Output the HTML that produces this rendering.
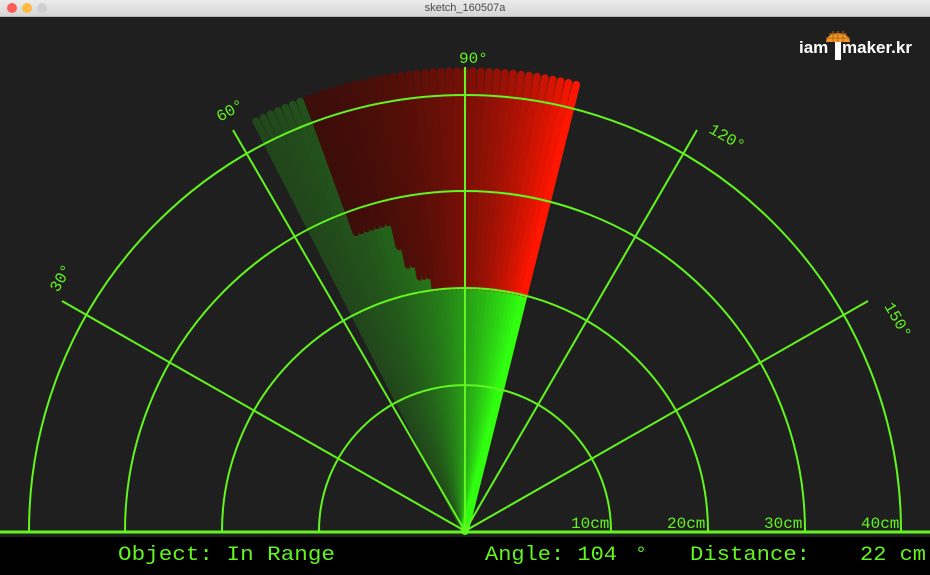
<!DOCTYPE html>
<html><head><meta charset="utf-8"><style>
html,body{margin:0;padding:0;width:930px;height:575px;overflow:hidden;background:#1e1f1e}
#tb{position:absolute;left:0;top:0;width:930px;height:16px;background:linear-gradient(#ececec,#d6d6d6);border-bottom:1px solid #b5b5b5;font:11px "Liberation Sans",sans-serif;color:#4a4a4a;text-align:center;line-height:16px}
.dot{position:absolute;top:3px;width:10px;height:10px;border-radius:50%}
svg{position:absolute;left:0;top:0}
</style></head><body>
<div id="tb">sketch_160507a
<div class="dot" style="left:7px;background:#fc5b57"></div>
<div class="dot" style="left:22px;background:#fdbc40"></div>
<div class="dot" style="left:37px;background:#cfcfcf"></div>
</div>
<svg id="s" width="930" height="575" viewBox="0 0 930 575">
<rect x="0" y="17" width="930" height="558" fill="#1e1f1e"/>
<g id="sweep" stroke-linecap="round" stroke-width="7.5"></g>
<g fill="none" stroke="#62f51f" stroke-width="2">
<path d="M29,531 A436,436 0 0 1 901,531"/>
<path d="M125,531 A340,340 0 0 1 805,531"/>
<path d="M222,531 A243,243 0 0 1 708,531"/>
<path d="M319,531 A146,146 0 0 1 611,531"/>
<line x1="465" y1="531" x2="62" y2="301"/>
<line x1="465" y1="531" x2="233" y2="130"/>
<line x1="465" y1="531" x2="465" y2="67"/>
<line x1="465" y1="531" x2="697" y2="130"/>
<line x1="465" y1="531" x2="868" y2="301"/>
<line x1="0" y1="532" x2="930" y2="532" stroke-width="3"/>
</g>
<rect x="0" y="537" width="930" height="38" fill="#000"/>
<g fill="#62f51f" font-family="Liberation Mono, monospace" font-size="16">
<text x="459" y="63">90°</text>
<text transform="translate(220,122) rotate(-30)">60°</text>
<text transform="translate(58,293) rotate(-60)">30°</text>
<text transform="translate(708,132) rotate(30)">120°</text>
<text transform="translate(884,306) rotate(60)">150°</text>
<text x="571" y="528">10cm</text>
<text x="667" y="528">20cm</text>
<text x="764" y="528">30cm</text>
<text x="861" y="528">40cm</text>
</g>
<g fill="#62f51f" font-family="Liberation Mono, monospace" font-size="20">
<text x="118" y="560" textLength="217" lengthAdjust="spacingAndGlyphs">Object: In Range</text>
<text x="485" y="560" textLength="132" lengthAdjust="spacingAndGlyphs">Angle: 104</text>
<text x="635" y="560">°</text>
<text x="690" y="560" textLength="120" lengthAdjust="spacingAndGlyphs">Distance:</text>
<text x="860" y="560" textLength="66" lengthAdjust="spacingAndGlyphs">22 cm</text>
</g>
<g>
<path d="M826,42 A12,9 0 0 1 850,42 Z" fill="#f0962a"/>
<path d="M829,34 h18 M826,38 h24 M833,31 v11 M838,31 v11 M843,31 v11" stroke="#b86a10" stroke-width="1"/>
<rect x="835" y="42" width="6" height="18" fill="#fff"/>
<text x="799" y="53" fill="#fff" font-family="Liberation Sans, sans-serif" font-weight="bold" font-size="17">iam</text>
<text x="842" y="53" fill="#fff" font-family="Liberation Sans, sans-serif" font-weight="bold" font-size="17">maker.kr</text>
</g>
</svg>
<script>
var g=document.getElementById('sweep'),cx=465,cy=531,ns='http://www.w3.org/2000/svg';
function rin(a){if(a<70)return 460;if(a<=76)return 318;if(a==77)return 292;if(a<=79)return 272;if(a<=82)return 258;return 245;}
function mix(c0,c1,t){return 'rgb('+c0.map(function(v,i){return Math.round(v+(c1[i]-v)*t)}).join(',')+')';}
function ln(a,r0,r1,col){var d=a*Math.PI/180,dx=-Math.cos(d),dy=-Math.sin(d);var l=document.createElementNS(ns,'line');l.setAttribute('x1',cx+dx*r0);l.setAttribute('y1',cy+dy*r0);l.setAttribute('x2',cx+dx*r1);l.setAttribute('y2',cy+dy*r1);l.setAttribute('stroke',col);g.appendChild(l);}
for(var a=63;a<=104;a++){var t=Math.pow(0.958,104-a);var r=rin(a);
ln(a,0,r,mix([30,31,30],[48,255,16],t));
if(r<460)ln(a,r,460,mix([40,12,10],[255,22,0],Math.pow(t,1.6)));}
</script>
</body></html>
